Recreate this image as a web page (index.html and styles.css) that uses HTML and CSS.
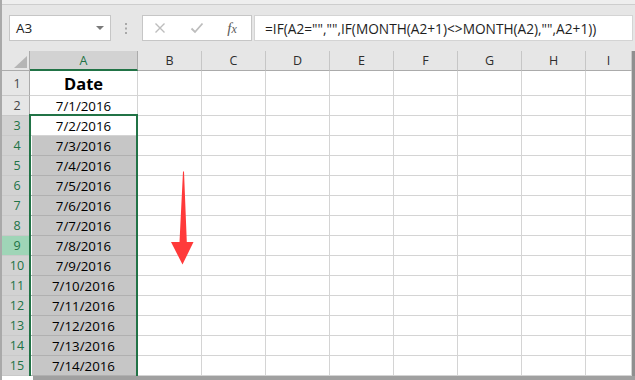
FILE: index.html
```html
<!DOCTYPE html>
<html>
<head>
<meta charset="utf-8">
<link rel="stylesheet" href="styles.css">
</head>
<body>
<div class="app">
  <div class="title-strip"></div>
  <div class="fbar">
    <div class="namebox"><span class="nb-text">A3</span><span class="nb-arrow"></span></div>
    <div class="grip">
      <svg width="3" height="11" viewBox="0 0 3 11"><rect x="0" y="0" width="2" height="2" fill="#a8a8a8"/><rect x="0" y="4.5" width="2" height="2" fill="#a8a8a8"/><rect x="0" y="9" width="2" height="2" fill="#a8a8a8"/></svg>
    </div>
    <div class="fxbox">
      <span class="ico ico-x"><svg width="12" height="12" viewBox="0 0 12 12"><path d="M1.5 1.5 L10.5 10.5 M10.5 1.5 L1.5 10.5" stroke="#bdbdbd" stroke-width="1.4" fill="none"/></svg></span>
      <span class="ico ico-ok"><svg width="14" height="12" viewBox="0 0 14 12"><path d="M1.5 6.5 L5 10 L12.5 1.5" stroke="#bdbdbd" stroke-width="1.8" fill="none"/></svg></span>
      <span class="ico ico-fx"><span class="fx-f">f</span><span class="fx-x">x</span></span>
    </div>
    <div class="formula">=IF(A2="","",IF(MONTH(A2+1)&lt;&gt;MONTH(A2),"",A2+1))</div>
  </div>
  <div class="sheet">
    <div class="corner"><svg width="13" height="12" viewBox="0 0 13 12"><polygon points="13,0 13,12 0,12" fill="#b5b5b5"/></svg></div>
    <div class="ch ch-sel">A</div><div class="ch">B</div><div class="ch">C</div><div class="ch">D</div><div class="ch">E</div><div class="ch">F</div><div class="ch">G</div><div class="ch">H</div><div class="ch">I</div>

    <div class="rh">1</div><div class="c c-bold">Date</div><div class="c"></div><div class="c"></div><div class="c"></div><div class="c"></div><div class="c"></div><div class="c"></div><div class="c"></div><div class="c"></div>
    <div class="rh">2</div><div class="c">7/1/2016</div><div class="c"></div><div class="c"></div><div class="c"></div><div class="c"></div><div class="c"></div><div class="c"></div><div class="c"></div><div class="c"></div>
    <div class="rh rh-sel">3</div><div class="c">7/2/2016</div><div class="c"></div><div class="c"></div><div class="c"></div><div class="c"></div><div class="c"></div><div class="c"></div><div class="c"></div><div class="c"></div>
    <div class="rh rh-sel">4</div><div class="c c-sel">7/3/2016</div><div class="c"></div><div class="c"></div><div class="c"></div><div class="c"></div><div class="c"></div><div class="c"></div><div class="c"></div><div class="c"></div>
    <div class="rh rh-sel">5</div><div class="c c-sel">7/4/2016</div><div class="c"></div><div class="c"></div><div class="c"></div><div class="c"></div><div class="c"></div><div class="c"></div><div class="c"></div><div class="c"></div>
    <div class="rh rh-sel">6</div><div class="c c-sel">7/5/2016</div><div class="c"></div><div class="c"></div><div class="c"></div><div class="c"></div><div class="c"></div><div class="c"></div><div class="c"></div><div class="c"></div>
    <div class="rh rh-sel">7</div><div class="c c-sel">7/6/2016</div><div class="c"></div><div class="c"></div><div class="c"></div><div class="c"></div><div class="c"></div><div class="c"></div><div class="c"></div><div class="c"></div>
    <div class="rh rh-sel">8</div><div class="c c-sel">7/7/2016</div><div class="c"></div><div class="c"></div><div class="c"></div><div class="c"></div><div class="c"></div><div class="c"></div><div class="c"></div><div class="c"></div>
    <div class="rh rh-hot">9</div><div class="c c-sel">7/8/2016</div><div class="c"></div><div class="c"></div><div class="c"></div><div class="c"></div><div class="c"></div><div class="c"></div><div class="c"></div><div class="c"></div>
    <div class="rh rh-sel">10</div><div class="c c-sel">7/9/2016</div><div class="c"></div><div class="c"></div><div class="c"></div><div class="c"></div><div class="c"></div><div class="c"></div><div class="c"></div><div class="c"></div>
    <div class="rh rh-sel">11</div><div class="c c-sel">7/10/2016</div><div class="c"></div><div class="c"></div><div class="c"></div><div class="c"></div><div class="c"></div><div class="c"></div><div class="c"></div><div class="c"></div>
    <div class="rh rh-sel">12</div><div class="c c-sel">7/11/2016</div><div class="c"></div><div class="c"></div><div class="c"></div><div class="c"></div><div class="c"></div><div class="c"></div><div class="c"></div><div class="c"></div>
    <div class="rh rh-sel">13</div><div class="c c-sel">7/12/2016</div><div class="c"></div><div class="c"></div><div class="c"></div><div class="c"></div><div class="c"></div><div class="c"></div><div class="c"></div><div class="c"></div>
    <div class="rh rh-sel">14</div><div class="c c-sel">7/13/2016</div><div class="c"></div><div class="c"></div><div class="c"></div><div class="c"></div><div class="c"></div><div class="c"></div><div class="c"></div><div class="c"></div>
    <div class="rh rh-sel">15</div><div class="c c-sel">7/14/2016</div><div class="c"></div><div class="c"></div><div class="c"></div><div class="c"></div><div class="c"></div><div class="c"></div><div class="c"></div><div class="c"></div>

    <div class="sel-box"></div>
  </div>
  <div class="hbar"></div>
  <svg class="arrow" width="36" height="104" viewBox="0 0 36 104"><polygon points="18,6.5 19,6.5 21.8,77 28.5,77 17.5,99.5 6,77 14.5,77" fill="#ff3a3a"/></svg>
</div>
</body>
</html>
```

FILE: styles.css
```css
* { box-sizing: border-box; }
html, body { margin: 0; padding: 0; background: #ffffff; }
body { font-family: "Open Sans", "Liberation Sans", sans-serif; }

.app {
  position: relative;
  width: 635px;
  height: 380px;
  overflow: hidden;
  background: #e6e6e6;
  border-left: 2px solid #a9a9a9;
  display: flex;
  flex-direction: column;
}

.title-strip {
  flex: none;
  height: 5px;
  background: #eeeeee;
  border-bottom: 1px solid #cdcdcd;
}

.fbar {
  flex: none;
  display: flex;
  height: 26px;
  margin: 10px 0 10px 0;
}

.namebox {
  width: 102px;
  margin-left: 7px;
  background: #ffffff;
  border: 1px solid #c6c6c6;
  display: flex;
  align-items: center;
  padding-left: 6px;
  padding-right: 6px;
}
.nb-text { font-size: 13.5px; color: #222; }
.nb-arrow {
  margin-left: auto;
  width: 0; height: 0;
  border-left: 4px solid transparent;
  border-right: 4px solid transparent;
  border-top: 4px solid #7a7a7a;
}

.grip {
  width: 31px;
  display: flex;
  align-items: center;
  justify-content: center;
}

.fxbox {
  width: 110px;
  background: #ffffff;
  border: 1px solid #c6c6c6;
  display: flex;
  align-items: center;
}
.ico { display: flex; align-items: center; justify-content: center; width: 20px; height: 20px; }
.ico-x { margin-left: 7px; }
.ico-ok { margin-left: 17px; }
.ico-fx { margin-left: 15px; font-family: "Liberation Serif", "DejaVu Serif", serif; font-style: italic; color: #5a5a5a; }
.fx-f { font-size: 15px; }
.fx-x { font-size: 12px; margin-left: 0px; position: relative; top: 1px; }

.formula {
  width: 379px;
  margin-left: 2px;
  background: #ffffff;
  border: 1px solid #d4d4d4;
  padding-left: 10px;
  display: flex;
  align-items: center;
  font-size: 13.7px;
  color: #1e1e1e;
  white-space: nowrap;
}

.sheet {
  position: relative;
  flex: none;
  display: grid;
  grid-template-columns: 28px 108px repeat(7, 64px) 46px;
  grid-template-rows: 20px 25px repeat(14, 20px);
  border-right: 3px solid #8f8f8f;
  background: #ffffff;
}

.corner {
  background: #e6e6e6;
  border-right: 1px solid #ababab;
  border-bottom: 1px solid #ababab;
  display: flex;
  align-items: flex-end;
  justify-content: flex-end;
  padding: 0 2px 2px 0;
}

.ch {
  background: #e6e6e6;
  border-right: 1px solid #c6c6c6;
  border-bottom: 1px solid #ababab;
  display: flex;
  align-items: center;
  justify-content: center;
  font-size: 12.5px;
  color: #2e2e2e;
}
.ch-sel {
  background: #d2d2d2;
  color: #217346;
  border-bottom: 2px solid #217346;
  border-right-color: #ababab;
}

.rh {
  background: #e6e6e6;
  border-right: 1px solid #ababab;
  border-bottom: 1px solid #c9c9c9;
  display: flex;
  align-items: center;
  justify-content: center;
  font-size: 12.5px;
  color: #444444;
  padding-left: 3px;
}
.rh-sel { background: #d2d2d2; color: #217346; }
.rh-hot { background: #9fd5b7; color: #217346; }

.c {
  background: #ffffff;
  border-right: 1px solid #d4d4d4;
  border-bottom: 1px solid #d4d4d4;
  display: flex;
  align-items: center;
  justify-content: center;
  font-size: 13.3px;
  color: #000000;
}
.c-bold { font-weight: 700; font-size: 16.5px; }
.c-sel {
  background: #c6c6c6;
  border-bottom-color: #b0b0b0;
  box-shadow: inset 2px 0 0 #ffffff;
}

.sel-box {
  position: absolute;
  left: 27px;
  top: 63px;
  width: 109px;
  height: 262px;
  border: 2px solid #217346;
  border-bottom: none;
  pointer-events: none;
}

.hbar {
  flex: none;
  height: 4px;
  background: linear-gradient(to right, #ffffff 0 31px, #a0a0a0 31px);
}

.arrow {
  position: absolute;
  left: 163px;
  top: 165px;
}
```
